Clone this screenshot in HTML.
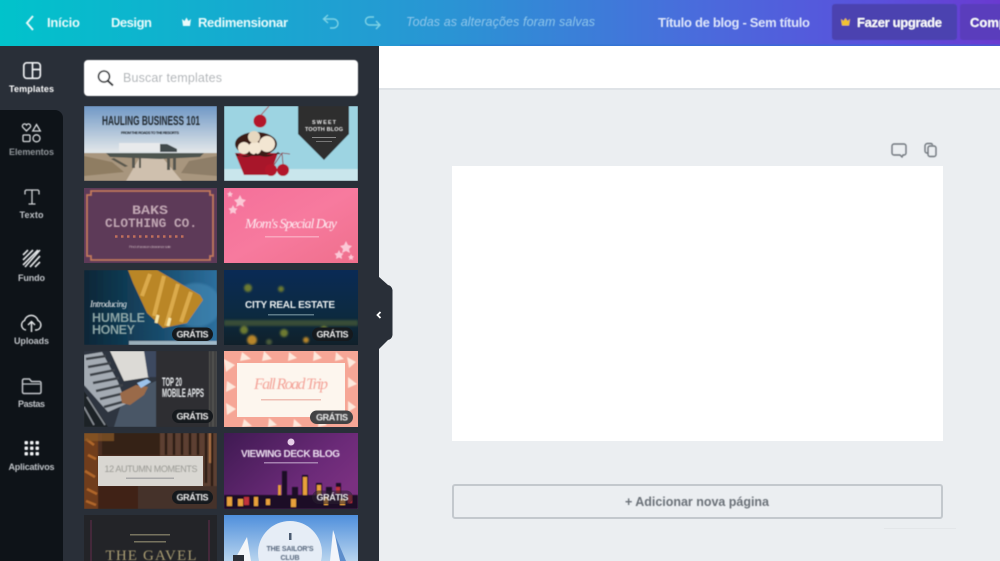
<!DOCTYPE html>
<html lang="pt"><head><meta charset="utf-8"><title>Título de blog</title>
<style>
html,body{margin:0;padding:0;width:1000px;height:561px;overflow:hidden;background:#ebeef1}
svg{display:block;font-family:"Liberation Sans",sans-serif}
</style></head><body>
<svg width="1000" height="561" viewBox="0 0 1000 561" xmlns="http://www.w3.org/2000/svg">
<defs>
<linearGradient id="top" x1="0" x2="1" y1="0" y2="0"><stop offset="0" stop-color="#01c3cb"/><stop offset=".25" stop-color="#17a9d0"/><stop offset=".45" stop-color="#2a94d4"/><stop offset=".7" stop-color="#4a6bdc"/><stop offset=".88" stop-color="#5a50dc"/><stop offset="1" stop-color="#6a3ad0"/></linearGradient>
<linearGradient id="sky1" x1="0" x2="0" y1="0" y2="1"><stop offset="0" stop-color="#7098c6"/><stop offset=".6" stop-color="#dfe5e8"/><stop offset="1" stop-color="#dfe5e8"/></linearGradient>
<linearGradient id="pink" x1="0" x2="1" y1="0" y2="1"><stop offset="0" stop-color="#f4709a"/><stop offset=".5" stop-color="#f77a9e"/><stop offset="1" stop-color="#ef6f8c"/></linearGradient>
<linearGradient id="honey" x1="0" x2="1" y1="0" y2="0"><stop offset="0" stop-color="#0a2636"/><stop offset=".55" stop-color="#174a6a"/><stop offset="1" stop-color="#2d6f9e"/></linearGradient>
<linearGradient id="city" x1="0" x2="0" y1="0" y2="1"><stop offset="0" stop-color="#0a2a55"/><stop offset=".6" stop-color="#0c2a40"/><stop offset="1" stop-color="#10202a"/></linearGradient>
<linearGradient id="purple" x1="0" x2="1" y1="0" y2=".6"><stop offset="0" stop-color="#3f1a52"/><stop offset=".7" stop-color="#6b2a78"/><stop offset="1" stop-color="#7a3080"/></linearGradient>
<linearGradient id="sail" x1="0" x2="0" y1="0" y2="1"><stop offset="0" stop-color="#4f8fdc"/><stop offset="1" stop-color="#b8d4ee"/></linearGradient>
<filter id="b1" x="-10%" y="-10%" width="120%" height="120%"><feGaussianBlur stdDeviation=".4"/></filter>
<filter id="b2" x="-10%" y="-10%" width="120%" height="120%"><feGaussianBlur stdDeviation="1"/></filter>
<filter id="b3"><feGaussianBlur stdDeviation=".6"/></filter>
</defs>

<!-- canvas area -->
<rect x="379" y="46" width="621" height="42" fill="#fff"/>
<rect x="379" y="88" width="621" height="2" fill="#dfe3e7"/>
<rect x="379" y="90" width="621" height="471" fill="#ebeef1"/>
<rect x="452" y="166" width="491" height="275" fill="#fff"/>
<rect x="453" y="485" width="489" height="33" rx="2" fill="none" stroke="#c3c8cd" stroke-width="2"/>
<text x="697" y="506" text-anchor="middle" font-size="12.500" font-weight="bold" fill="#6b7178" textLength="144" filter="url(#b1)">+ Adicionar nova página</text>
<rect x="884" y="528" width="72" height="1" fill="#e3e6e9"/>
<g fill="none" stroke="#6f767d" stroke-width="1.400" filter="url(#b1)">
<path d="M894 144h10a2 2 0 0 1 2 2v7a2 2 0 0 1-2 2h-1l-1 2-2-2h-6a2 2 0 0 1-2-2v-7a2 2 0 0 1 2-2z"/>
<rect x="928" y="146" width="8" height="10.500" rx="2"/>
<path d="M928 153h-1a2 2 0 0 1-2-2v-5a2.500 2.500 0 0 1 2.500-2.500h3a2 2 0 0 1 2 1.500"/>
</g>

<!-- top bar -->
<rect width="1000" height="46" fill="url(#top)"/>
<rect y="44.500" x="400" width="600" height="1.500" fill="#2a6fd0" opacity=".5"/>
<g filter="url(#b1)">
<path d="M33 16l-6 7 6 7" fill="none" stroke="#e8fbfb" stroke-width="2"/>
<g font-size="13" font-weight="bold" fill="#e9fbfb">
<text x="47" y="27" textLength="33">Início</text>
<text x="111" y="27" textLength="41">Design</text>
<text x="198" y="27" textLength="90">Redimensionar</text>
</g>
<path d="M182 19l2.500 2 2-3.500 2 3.500 2.500-2-1 7h-7z" fill="#e9fbfb"/>
<g fill="none" stroke="#7fd3e6" stroke-width="1.400">
<path d="M328 15l-4.500 4 4.500 4"/><path d="M323.500 19h10a4.500 4.500 0 0 1 0 9h-3.500"/>
<path d="M376 21l4 4-4 4"/><path d="M380 25h-10.500a4 4 0 0 1 0-8h4.500"/>
</g>
<text x="406" y="26" font-size="12.500" font-style="italic" fill="#8fc6ea" textLength="189">Todas as alterações foram salvas</text>
<text x="658" y="27" font-size="13" font-weight="bold" fill="#dfe6fa" textLength="152">Título de blog - Sem título</text>
<rect x="832" y="4" width="125" height="36" rx="3" fill="#4c43b0"/>
<rect x="960" y="4" width="50" height="36" rx="3" fill="#5a3cbc"/>
<path d="M841 19l2.500 2 2-3 2 3 2.500-2-1 6.500h-7z" fill="#f2c230"/>
<text x="857" y="27" font-size="13" font-weight="bold" fill="#fff" textLength="85">Fazer upgrade</text>
<text x="970" y="27" font-size="13" font-weight="bold" fill="#fff">Compartilhar</text>
</g>

<!-- panel + sidebar -->
<rect x="0" y="46" width="379" height="515" fill="#292f38"/>
<path d="M0 110h55a8 8 0 0 1 8 8v443H0z" fill="#0e1318"/>
<path d="M378 276l10 9a6 6 0 0 1 4.500 5v45a6 6 0 0 1-4.500 5l-10 10z" fill="#292f38"/>
<path d="M380.500 312l-3 3 3 3" fill="none" stroke="#fff" stroke-width="1.800"/>

<g filter="url(#b1)">
<!-- sidebar icons -->
<g fill="none" stroke="#f0f2f4" stroke-width="1.700">
<rect x="23.800" y="62.800" width="16.500" height="15.500" rx="3"/><path d="M32.500 63v15M32.500 69.500h7.500"/>
</g>
<g fill="none" stroke="#d8dbde" stroke-width="1.300">
<path d="M26.500 131l-3.800-3.800a2.100 2.100 0 0 1 3.800-2.200 2.100 2.100 0 0 1 3.800 2.200z"/><path d="M36.500 124.500l3.800 6.500h-7.600z"/><rect x="23" y="135" width="7" height="6.500" rx="1"/><circle cx="36.500" cy="138.300" r="3.500"/>
<path d="M25 194.500v-3.500l1-1h12l1 1v3.500M32 190v14M28.500 204h7" stroke="#d0d3d6"/>
<path d="M26 330a5 5 0 0 1-1.500-9.500 7 7 0 0 1 13.500 0 5 5 0 0 1-1.500 9.500h-1.500M28 330" stroke="#e4e6e8" stroke-width="1.500"/>
<path d="M31.500 332v-10M28 325l3.500-3.500 3.500 3.500" stroke="#e4e6e8" stroke-width="1.500"/>
<path d="M24 379h5.500l2 2.500h8a1.500 1.500 0 0 1 1.500 1.500v9a1.500 1.500 0 0 1-1.500 1.500H24a1.500 1.500 0 0 1-1.500-1.500v-11.500a1.500 1.500 0 0 1 1.500-1.500z" stroke="#c4c8cc" stroke-width="1.500"/>
<path d="M23 384h17" stroke="#c4c8cc"/>
</g>
<g stroke="#dfe1e3" stroke-width="1.700">
<path d="M23 255l5-5M23 260l10-10M23 265l15-15M25 267l15-17M30 267l10-11M35 267l5-5"/>
</g>
<g fill="#f0f2f4">
<rect x="24.500" y="441" width="3.500" height="3.500" rx="1"/><rect x="30" y="441" width="3.500" height="3.500" rx="1"/><rect x="35.500" y="441" width="3.500" height="3.500" rx="1"/>
<rect x="24.500" y="446.500" width="3.500" height="3.500" rx="1"/><rect x="30" y="446.500" width="3.500" height="3.500" rx="1"/><rect x="35.500" y="446.500" width="3.500" height="3.500" rx="1"/>
<rect x="24.500" y="452" width="3.500" height="3.500" rx="1"/><rect x="30" y="452" width="3.500" height="3.500" rx="1"/><rect x="35.500" y="452" width="3.500" height="3.500" rx="1"/>
</g>
<g font-size="9" font-weight="bold" text-anchor="middle" fill="#bfc3c7">
<text x="31.500" y="92" fill="#fff" textLength="45">Templates</text>
<text x="31.500" y="155" fill="#8f9499" textLength="45">Elementos</text>
<text x="31.500" y="218" textLength="24">Texto</text>
<text x="31.500" y="281" textLength="27">Fundo</text>
<text x="31.500" y="344" textLength="35">Uploads</text>
<text x="31.500" y="407" textLength="27">Pastas</text>
<text x="31.500" y="470" textLength="46">Aplicativos</text>
</g>
<!-- search -->
<rect x="84" y="60" width="274" height="36" rx="4" fill="#fff"/>
<circle cx="104" cy="76.500" r="5.500" fill="none" stroke="#1c2126" stroke-width="1.600"/>
<path d="M108 81l5 4.500" stroke="#1c2126" stroke-width="2"/>
<text x="123" y="82" font-size="12.500" fill="#aeb2b6" textLength="99">Buscar templates</text>
</g>

<!-- thumb 1 -->
<svg x="84" y="106" width="133" height="75" viewBox="0 0 133 75">
<g filter="url(#b3)">
<rect width="133" height="75" fill="url(#sky1)"/>
<path d="M0 47h133v28H0z" fill="#a8967e"/>
<path d="M42 75l14-24h22l20 24z" fill="#cfc0ae"/>
<path d="M0 50l28 6 12 10L0 70z" fill="#8f7d62"/><path d="M133 50l-28 5-8 12 36 3z" fill="#8e7e68"/>
<path d="M22 47h98l-4 4-40 2-50-2z" fill="#4e5450"/>
<path d="M30 52l14 8-3 1-14-8z" fill="#5a584e"/>
<rect x="48" y="51" width="3" height="11" fill="#565650"/><rect x="55" y="51" width="2" height="11" fill="#565650"/><rect x="83" y="51" width="3" height="13" fill="#565650"/><rect x="89" y="51" width="3" height="13" fill="#565650"/>
<rect x="35" y="37" width="41" height="8.500" fill="#e8eaec"/><path d="M76 38h7l10 5v3H76z" fill="#3f484c"/>
</g>
<g text-anchor="middle" font-weight="bold" fill="#242b33" filter="url(#b1)">
<text x="67" y="19" font-size="13" textLength="98" lengthAdjust="spacingAndGlyphs">HAULING BUSINESS 101</text>
<text x="66" y="28" font-size="3.800" textLength="58">FROM THE ROADS TO THE RESORTS</text>
</g>
</svg>
<!-- thumb 2 -->
<svg x="224" y="106" width="134" height="75" viewBox="0 0 134 75">
<g filter="url(#b3)">
<rect width="134" height="75" fill="#9dd4e2"/>
<rect y="63" width="134" height="12" fill="#c9e6ec"/>
<path d="M11 47h43l-8 22H20z" fill="#a8142c"/>
<ellipse cx="32" cy="38" rx="21" ry="12" fill="#3a1a18"/>
<circle cx="20" cy="42" r="6" fill="#f2e6d2"/><circle cx="31" cy="42" r="6.500" fill="#f4e8d4"/><circle cx="43" cy="38" r="8" fill="#f2e6d2"/><circle cx="30" cy="31" r="6" fill="#e7d8c0"/>
<path d="M12 47q10 8 20 0q10 8 22 -1l3 2-45 2z" fill="#3a1a18"/>
<circle cx="36" cy="15" r="6.500" fill="#b3152c"/><path d="M37 9l8-9" stroke="#a5616a" stroke-width="1" fill="none"/>
<circle cx="47" cy="64" r="6" fill="#b3142a"/><circle cx="59" cy="64" r="6" fill="#b3142a"/>
<path d="M50 59l8-12 8 1M59 58l-1-11" stroke="#8a2a30" stroke-width=".8" fill="none"/>
<path d="M74 0h51v28L100 54 74 28z" fill="#2e2d2e"/>
</g>
<g text-anchor="middle" font-weight="bold" fill="#eeeeee" filter="url(#b1)">
<text x="100" y="18" font-size="5.500" textLength="24">SWEET</text>
<text x="100" y="25" font-size="5.500" textLength="38">TOOTH BLOG</text>
</g>
<rect x="88" y="31" width="24" height="1" fill="#8a8a8a"/><rect x="92" y="35" width="16" height="1" fill="#777"/>
</svg>
<!-- thumb 3 -->
<svg x="84" y="188" width="133" height="75" viewBox="0 0 133 75">
<rect width="133" height="75" fill="#5d3a58"/>
<path d="M7 3h119v4h3v61h-3v4H7v-4H3V7h4z" fill="none" stroke="#c1785c" stroke-width="1.800" filter="url(#b1)"/>
<g text-anchor="middle" fill="#c0a6b2" font-family="Liberation Mono,monospace" font-weight="bold" filter="url(#b1)">
<text x="66" y="26" font-size="13" textLength="36" lengthAdjust="spacingAndGlyphs">BAKS</text>
<text x="67" y="39" font-size="13" textLength="92" lengthAdjust="spacingAndGlyphs">CLOTHING CO.</text>
</g>
<path d="M31 48.500h72" stroke="#c0705c" stroke-width="2.500" stroke-dasharray="2.500 3.500"/>
<text x="66" y="60" text-anchor="middle" font-size="4" fill="#bba5b0" textLength="42" filter="url(#b1)">Find of season clearance sale</text>
</svg>
<!-- thumb 4 -->
<svg x="224" y="188" width="134" height="75" viewBox="0 0 134 75">
<rect width="134" height="75" fill="url(#pink)"/>
<g fill="#fbc8d6" filter="url(#b1)"><path d="M16 7l2 4 4 1-3 3 1 4-4-2-4 2 1-4-3-3 4-1z"/><path d="M9 17l1.500 3 3 .5-2 2.500.5 3-3-1.500-3 1.500.5-3-2-2.500 3-.5z"/><path d="M6 3l1 2 2 .5-1.500 1.500.5 2-2-1-2 1 .5-2L3 5.500l2-.5z"/><path d="M122 53l2 4 4 1-3 3 1 4-4-2-4 2 1-4-3-3 4-1z"/><path d="M115 62l1.500 3 3 .5-2 2.500.5 3-3-1.500-3 1.500.5-3-2-2.500 3-.5z"/><path d="M127 66l1 2 2 .5-1.500 1.500.5 2-2-1-2 1 .5-2-1.500-1.500 2-.5z"/></g>
<text x="67" y="40" text-anchor="middle" font-family="Liberation Serif,serif" font-style="italic" font-size="14" fill="#fdeaf0" textLength="92" filter="url(#b1)">Mom's Special Day</text>
<rect x="41" y="48" width="54" height="1.500" fill="#f9a7be"/>
</svg>
<!-- thumb 5 -->
<svg x="84" y="270" width="133" height="75" viewBox="0 0 133 75">
<g filter="url(#b3)">
<rect width="133" height="75" fill="url(#honey)"/>
<ellipse cx="112" cy="35" rx="25" ry="22" fill="#4a90bc" opacity=".5" filter="url(#b2)"/>
<path d="M44 0h29l43 25 3 5-16 23-24 5-16-15-14-30z" fill="#ba8628"/>
<path d="M66 4l-8 22M80 6l-10 40M94 14l-12 42M107 22l-10 30" stroke="#e6b658" stroke-width="4" opacity=".75"/>
<path d="M74 45l-2 8M86 48l-2 8" stroke="#f8e6a8" stroke-width="3"/>
<rect x="45" y="71" width="88" height="4" fill="#c8d4da" opacity=".75"/>
</g>
<g filter="url(#b1)">
<text x="6" y="37" font-family="Liberation Serif,serif" font-style="italic" font-size="9" fill="#f2f2f2" textLength="37">Introducing</text>
<text x="8" y="52" font-size="12.500" font-weight="bold" fill="#8ca4a4" textLength="53">HUMBLE</text>
<text x="8" y="64" font-size="12.500" font-weight="bold" fill="#8ca4a4" textLength="43">HONEY</text>
</g>
<rect x="88" y="57.500" width="41" height="13.500" rx="6.700" fill="#15191d"/>
<text x="108.500" y="67.500" text-anchor="middle" font-size="9" font-weight="bold" fill="#eee" textLength="32" filter="url(#b1)">GRÁTIS</text>
</svg>
<!-- thumb 6 -->
<svg x="224" y="270" width="134" height="75" viewBox="0 0 134 75">
<rect width="134" height="75" fill="url(#city)"/>
<g fill="#6d7a30" filter="url(#b2)"><circle cx="24" cy="18" r="4"/><circle cx="57" cy="19" r="3"/><rect x="0" y="50" width="134" height="6" opacity=".45"/><circle cx="28" cy="70" r="5" fill="#b8862a"/><circle cx="100" cy="60" r="4"/><circle cx="60" cy="63" r="4"/><circle cx="82" cy="70" r="3" fill="#b8862a"/><circle cx="20" cy="60" r="4"/><circle cx="45" cy="72" r="3" fill="#4a5a3a"/></g>
<text x="66" y="38" text-anchor="middle" font-size="10" font-weight="bold" fill="#eef2f2" textLength="90" filter="url(#b1)">CITY REAL ESTATE</text>
<rect x="44" y="44" width="46" height="1.500" fill="#5d7a88"/>
<rect x="88" y="57.500" width="41" height="13.500" rx="6.700" fill="#15191d"/>
<text x="108.500" y="67.500" text-anchor="middle" font-size="9" font-weight="bold" fill="#eee" textLength="32" filter="url(#b1)">GRÁTIS</text>
</svg>
<!-- thumb 7 -->
<svg x="84" y="351" width="133" height="76" viewBox="0 0 133 76">
<g filter="url(#b3)">
<rect width="133" height="76" fill="#2d2e33"/>
<rect width="72" height="76" fill="#2f3640"/>
<path d="M26 0h46v10L66 26 40 30z" fill="#dcdad6"/>
<path d="M60 0h12v26h-8z" fill="#3c4a60"/>
<path d="M40 44l32-14v46H30z" fill="#4a5666"/>
<path d="M0 4l18-3 16 30 8 22-18 8L0 34z" fill="#a4abb3"/>
<path d="M2 8l20-3M4 16l23-4M6 24l25-5M9 32l26-5M12 40l27-6M16 48l25-6M20 56l22-6" stroke="#3c4248" stroke-width="2.500"/>
<path d="M0 40l24 36H0z" fill="#1e2126"/>
<path d="M3 46l18 28M0 56l10 18" stroke="#8a9096" stroke-width="1.500"/>
<path d="M36 42l16-8 12 2-4 8-14 10-8-2z" fill="#9a6a48"/>
<path d="M53 32l10-4 4 3-10 6z" fill="#9cc2ea"/>
<rect x="125" y="0" width="8" height="76" fill="#50504e"/>
<path d="M127 0v76M131 0v76" stroke="#2d2e33" stroke-width="1"/>
</g>
<g font-weight="bold" fill="#eceff1" filter="url(#b1)">
<text x="78" y="35" font-size="12" textLength="20" lengthAdjust="spacingAndGlyphs">TOP 20</text>
<text x="78" y="46" font-size="12" textLength="42" lengthAdjust="spacingAndGlyphs">MOBILE APPS</text>
</g>
<rect x="88" y="58.500" width="41" height="13.500" rx="6.700" fill="#15191d"/>
<text x="108.500" y="68.500" text-anchor="middle" font-size="9" font-weight="bold" fill="#eee" textLength="32" filter="url(#b1)">GRÁTIS</text>
</svg>
<!-- thumb 8 -->
<svg x="224" y="351" width="134" height="76" viewBox="0 0 134 76">
<rect width="134" height="76" fill="#f6a696"/>
<g fill="#fde8dc" filter="url(#b1)"><path d="M0 8l11 6-9 7zM3 30l9 6-10 5zM2 52l10 6-9 6zM123 6l9 5-7 6zM124 26l9 7-9 4zM124 50l8 6-8 5zM18 1l9 7-11 2zM40 0l8 8-10 2zM65 1l8 6-9 3zM90 0l8 7-9 3zM112 1l8 7-9 2zM20 68l8 7-10 1zM45 67l8 7-9 2zM70 68l8 7-9 1zM95 67l8 7-9 2z"/></g>
<rect x="13" y="12" width="108" height="54" fill="#fdf6ee"/>
<text x="67" y="38" text-anchor="middle" font-family="Liberation Serif,serif" font-style="italic" font-size="16" fill="#f4a49a" textLength="74" filter="url(#b1)">Fall Road Trip</text>
<rect x="37" y="48" width="60" height="1.500" fill="#eebfb4"/>
<rect x="86" y="59.500" width="43" height="13.500" rx="6.700" fill="#424244"/>
<text x="108" y="69.500" text-anchor="middle" font-size="9" font-weight="bold" fill="#eee" textLength="32" filter="url(#b1)">GRÁTIS</text>
</svg>
<!-- thumb 9 -->
<svg x="84" y="433" width="133" height="76" viewBox="0 0 133 76">
<g filter="url(#b3)">
<rect width="133" height="76" fill="#4c2d20"/>
<rect width="14" height="76" fill="#6f3c1c"/>
<path d="M2 6l8 6M4 22l8 4M1 38l10 6M3 56l10 5M2 68l10 4" stroke="#b0662a" stroke-width="2.500"/>
<path d="M18 0h58v22H18z" fill="#362018"/>
<path d="M0 0h30v8H0z" fill="#8a5a28" opacity=".7"/>
<path d="M76 0h57v60H76z" fill="#5d4030"/>
<path d="M82 0v22M90 0v22M98 0v22M106 0v22M114 0v22M122 0v50M128 0v60" stroke="#2c1c16" stroke-width="2.500"/>
<path d="M122 0v30" stroke="#a87044" stroke-width="2" transform="translate(4 0)"/>
<path d="M50 53h83v23H50z" fill="#45302a"/>
<path d="M14 53h40v23H14z" fill="#3f2016"/>
</g>
<rect x="14" y="23" width="105" height="30" fill="#d9d7d2"/>
<text x="67" y="39" text-anchor="middle" font-size="9" fill="#9a9a94" textLength="93" filter="url(#b1)">12 AUTUMN MOMENTS</text>
<rect x="42" y="44.500" width="48" height="1.500" fill="#aaa"/>
<rect x="88" y="57.500" width="41" height="13.500" rx="6.700" fill="#15191d"/>
<text x="108.500" y="67.500" text-anchor="middle" font-size="9" font-weight="bold" fill="#eee" textLength="32" filter="url(#b1)">GRÁTIS</text>
</svg>
<!-- thumb 10 -->
<svg x="224" y="433" width="134" height="76" viewBox="0 0 134 76">
<rect width="134" height="76" fill="url(#purple)"/>
<circle cx="67" cy="9" r="3.500" fill="#e6cde8"/>
<text x="66.500" y="24" text-anchor="middle" font-size="10" font-weight="bold" fill="#ecdff0" textLength="99" filter="url(#b1)">VIEWING DECK BLOG</text>
<rect x="40" y="29" width="54" height="1.500" fill="#a581b0"/>
<g filter="url(#b3)">
<g fill="#1e0e26"><rect x="0" y="62" width="134" height="14"/><rect x="58" y="38" width="5" height="30"/><rect x="78" y="42" width="6" height="26"/><rect x="92" y="50" width="6" height="18"/><rect x="112" y="50" width="5" height="18"/><rect x="68" y="54" width="6" height="14"/><rect x="102" y="54" width="6" height="14"/></g>
<g fill="#e8a03a"><rect x="79" y="44" width="4" height="18"/><rect x="54" y="52" width="3" height="10"/><rect x="93" y="52" width="4" height="10"/><rect x="3" y="64" width="5" height="9"/><rect x="14" y="66" width="5" height="7"/><rect x="30" y="64" width="4" height="9"/><rect x="42" y="66" width="4" height="6"/><rect x="67" y="66" width="5" height="8"/><rect x="100" y="64" width="4" height="8"/><rect x="116" y="66" width="5" height="6"/></g>
<g fill="#c0303a"><rect x="20" y="64" width="5" height="8"/><rect x="112" y="54" width="4" height="6"/><rect x="124" y="62" width="4" height="8"/></g>
</g>
<rect x="88" y="57.500" width="41" height="13.500" rx="6.700" fill="#2a2030" opacity=".55"/>
<text x="108.500" y="67.500" text-anchor="middle" font-size="9" font-weight="bold" fill="#eee" textLength="32" filter="url(#b1)">GRÁTIS</text>
</svg>
<!-- thumb 11 -->
<svg x="84" y="515" width="133" height="46" viewBox="0 0 133 46">
<rect width="133" height="46" fill="#232428"/>
<rect x="6" y="5" width="2" height="41" fill="#44283a"/><rect x="124" y="5" width="2" height="41" fill="#44283a"/>
<rect x="46" y="19" width="40" height="1.500" fill="#77735f"/><rect x="50" y="26" width="32" height="1.500" fill="#77735f"/>
<text x="67" y="45" text-anchor="middle" font-family="Liberation Serif,serif" font-size="15" fill="#a99c72" textLength="91" filter="url(#b1)">THE GAVEL</text>
</svg>
<!-- thumb 12 -->
<svg x="224" y="515" width="134" height="46" viewBox="0 0 134 46">
<rect width="134" height="46" fill="url(#sail)"/>
<circle cx="66" cy="38" r="32" fill="#e6edf6"/>
<path d="M23 22l4 24H10z" fill="#f4f6f8"/>
<path d="M109 15l11 31h-14z" fill="#f2f5fa"/>
<path d="M111 20l11 26h-6z" fill="#5d8dcb"/>
<rect x="9" y="40" width="11" height="6" fill="#2c3038"/>
<rect x="65" y="18" width="2.500" height="7" fill="#4a5a70"/>
<g text-anchor="middle" font-size="7" font-weight="bold" fill="#56667c" filter="url(#b1)"><text x="66" y="36" textLength="47">THE SAILOR'S</text><text x="66" y="45" textLength="19">CLUB</text></g>
</svg>
</svg>
</body></html>
